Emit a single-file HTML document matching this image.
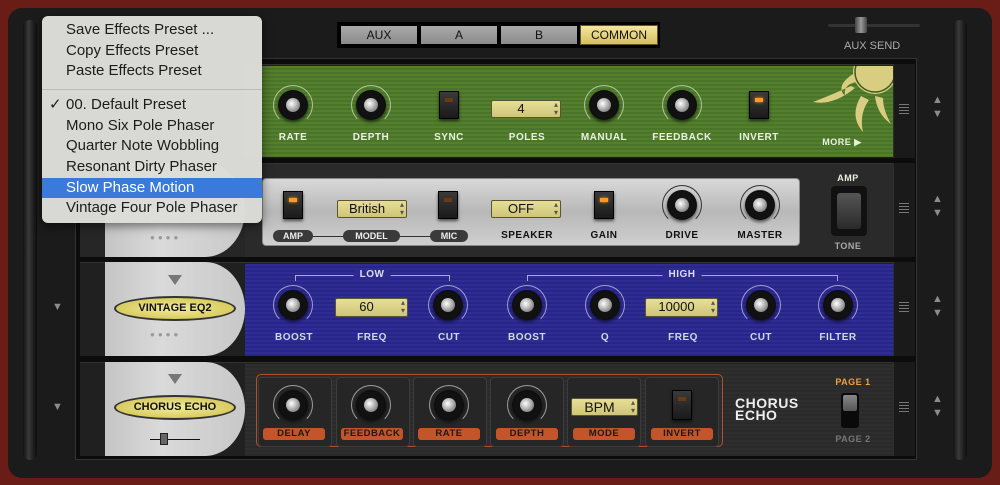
<!DOCTYPE html>
<html><head><meta charset="utf-8"><style>
*{margin:0;padding:0;box-sizing:border-box}
body{width:1000px;height:485px;background:#6a1c16;position:relative;overflow:hidden;font-family:"Liberation Sans",sans-serif}
.a{position:absolute}
.frame{left:8px;top:8px;width:984px;height:470px;background:#1b1b1b;border-radius:14px}
.rail{width:14px;background:linear-gradient(90deg,#111,#3a3a3a 40%,#222 70%,#0d0d0d);border-radius:7px}
.rack{left:75px;top:58px;width:842px;height:402px;background:#0c0c0c;border:1px solid #333}
.row{left:80px;width:833px;height:94px;background:#202020;border-top:1px solid #333}
.plate{width:140px;height:94px;background:linear-gradient(90deg,#c4c4c4,#dadada 40%,#c8c8c8);border-radius:0 40px 40px 0/0 50% 50% 0}
.handle{width:22px;height:94px;background:#1a1a1a;border-left:1px solid #2e2e2e}
.handle:after{content:"";position:absolute;left:5px;top:40px;width:10px;height:11px;background:repeating-linear-gradient(#777 0 1px,transparent 1px 3px)}
.knob{width:40px;height:40px;margin:-20px 0 0 -20px;border-radius:50%;border:1px solid rgba(255,255,255,.55);border-bottom-color:transparent}
.knob:before{content:"";position:absolute;left:4px;top:4px;width:30px;height:30px;border-radius:50%;background:radial-gradient(circle at 50% 50%,#111 60%,#000);box-shadow:0 2px 3px rgba(0,0,0,.6)}
.knob:after{content:"";position:absolute;left:12px;top:12px;width:14px;height:14px;border-radius:50%;background:radial-gradient(circle at 40% 40%,#fff,#999 60%,#555)}
.sw{width:20px;height:28px;margin:-14px 0 0 -10px;background:linear-gradient(#3a3a3a,#1a1a1a);border:1px solid #000;box-shadow:0 2px 3px rgba(0,0,0,.6)}
.sw:after{content:"";position:absolute;left:5px;top:6px;width:8px;height:4px;background:#6b3a10}
.sw.on:after{background:#ff9a20;box-shadow:0 0 3px #ff9a20}
.disp{height:18px;background:linear-gradient(#e6df95,#cfc57a);border:1px solid #5a5430;border-radius:2px;font-size:13px;color:#111;text-align:center;line-height:16px;padding-right:10px}
.disp:after{content:"▴\A▾";white-space:pre;position:absolute;right:2px;top:0;font-size:8px;line-height:8px;color:#555}
.lbl{font-size:10px;font-weight:bold;color:#e8f0e0;transform:translateX(-50%);white-space:nowrap;letter-spacing:.5px}
.pill{font-size:9.5px;font-weight:bold;color:#1a1a1a;background:#c4552b;border-radius:3px;height:12px;line-height:12px;text-align:center;letter-spacing:.5px}
.amppill{font-size:9px;font-weight:bold;color:#eee;background:#3a3a3a;border-radius:6px;height:12px;line-height:12px;text-align:center}
.tab{top:25px;width:78px;height:20px;background:linear-gradient(#aaa,#8a8a8a);border:1px solid #000;font-size:12px;color:#111;text-align:center;line-height:18px}
.oval{width:122px;height:25px;border-radius:50%;background:radial-gradient(ellipse,#f4ec9c,#d8cc60 70%,#8a8030);border:2px solid #333;font-size:11px;font-weight:bold;text-align:center;line-height:21px;color:#111}
.tri{width:0;height:0;border-left:7px solid transparent;border-right:7px solid transparent;border-top:10px solid #777}
.arr{color:#8c8c8c;font-size:11px;line-height:14px}
.menu{left:42px;top:16px;width:220px;height:207px;background:rgba(220,220,216,.98);border-radius:6px;box-shadow:0 3px 10px rgba(0,0,0,.5);font-size:15px;color:#1c1c1c}
.mi{position:absolute;left:24px;height:20px;line-height:20px;white-space:nowrap}
.grp{width:74px;height:70px;border:1px solid #3c3c3c;border-radius:4px;top:377px;background:#262626}
</style></head><body>
<div class="a frame"></div>
<div class="a rail" style="left:23px;top:20px;height:440px"></div>
<div class="a rail" style="left:953px;top:20px;height:440px"></div>
<div class="a" style="left:337px;top:22px;width:323px;height:26px;background:#000"></div>
<div class="a tab" style="left:340px">AUX</div>
<div class="a tab" style="left:420px">A</div>
<div class="a tab" style="left:500px">B</div>
<div class="a tab" style="left:580px;background:linear-gradient(#f4e6a0,#d6bf60);border-color:#6a5520">COMMON</div>
<div class="a" style="left:828px;top:24px;width:92px;height:3px;background:#333;border-radius:2px"></div>
<div class="a" style="left:855px;top:17px;width:12px;height:16px;background:linear-gradient(90deg,#444,#999,#444);border-radius:2px"></div>
<div class="a" style="left:844px;top:40px;font-size:11px;color:#aaa">AUX SEND</div>
<div class="a rack"></div>
<div class="a row" style="top:64px"></div>
<div class="a row" style="top:163px;background:#262626"></div>
<div class="a row" style="top:262px"></div>
<div class="a row" style="top:362px"></div>
<!-- row1 -->
<div class="a" style="left:243px;top:66px;width:650px;height:91px;background:repeating-linear-gradient(#547f2d 0 2px,#4a7427 2px 4px)"></div>
<svg class="a" style="left:805px;top:66px" width="88" height="70" viewBox="0 0 88 70"><g fill="#d9cd82"><circle cx="70" cy="6" r="22"/><path d="M48 8 Q30 20 40 30 Q38 18 52 16Z M50 22 Q28 40 8 36 Q24 30 46 20Z M56 30 Q44 50 58 66 Q54 48 64 34Z M70 30 Q72 48 86 58 Q78 44 78 32Z"/></g><circle cx="70" cy="6" r="20" fill="none" stroke="#3d5a20" stroke-width="1.5"/></svg>
<div class="a knob" style="left:293px;top:105px"></div>
<div class="a knob" style="left:371px;top:105px"></div>
<div class="a sw" style="left:449px;top:105px"></div>
<div class="a disp" style="left:491px;top:100px;width:70px">4</div>
<div class="a knob" style="left:604px;top:105px"></div>
<div class="a knob" style="left:682px;top:105px"></div>
<div class="a sw on" style="left:759px;top:105px"></div>
<div class="a lbl" style="left:293px;top:132px">RATE</div>
<div class="a lbl" style="left:371px;top:132px">DEPTH</div>
<div class="a lbl" style="left:449px;top:132px">SYNC</div>
<div class="a lbl" style="left:527px;top:132px">POLES</div>
<div class="a lbl" style="left:604px;top:132px">MANUAL</div>
<div class="a lbl" style="left:682px;top:132px">FEEDBACK</div>
<div class="a lbl" style="left:759px;top:132px">INVERT</div>
<div class="a lbl" style="left:842px;top:137px;font-size:9px">MORE ▶</div>
<!-- row2 -->
<div class="a" style="left:245px;top:164px;width:648px;height:93px;background:#2a2a2a"></div>
<div class="a plate" style="left:105px;top:163px"></div>
<div class="a" style="left:150px;top:233px;font-size:8px;color:#999;letter-spacing:3px">●●●●</div>
<div class="a" style="left:262px;top:178px;width:538px;height:68px;background:linear-gradient(#d8d8d8,#b8b8b8 50%,#cfcfcf);border-radius:4px;border:1px solid #888"></div>
<div class="a sw on" style="left:293px;top:205px"></div>
<div class="a disp" style="left:337px;top:200px;width:70px">British</div>
<div class="a sw" style="left:448px;top:205px"></div>
<div class="a disp" style="left:491px;top:200px;width:70px">OFF</div>
<div class="a sw on" style="left:604px;top:205px"></div>
<div class="a knob" style="left:682px;top:205px;border-color:#333;border-bottom-color:transparent"></div>
<div class="a knob" style="left:760px;top:205px;border-color:#333;border-bottom-color:transparent"></div>
<div class="a" style="left:293px;top:236px;width:170px;height:1px;background:#333"></div>
<div class="a amppill" style="left:273px;top:230px;width:40px">AMP</div>
<div class="a amppill" style="left:343px;top:230px;width:57px">MODEL</div>
<div class="a amppill" style="left:430px;top:230px;width:38px">MIC</div>
<div class="a lbl" style="left:527px;top:230px;color:#111">SPEAKER</div>
<div class="a lbl" style="left:604px;top:230px;color:#111">GAIN</div>
<div class="a lbl" style="left:682px;top:230px;color:#111">DRIVE</div>
<div class="a lbl" style="left:760px;top:230px;color:#111">MASTER</div>
<div class="a lbl" style="left:848px;top:173px;font-size:9px">AMP</div>
<div class="a" style="left:831px;top:186px;width:36px;height:50px;background:#111;border-radius:4px"></div>
<div class="a" style="left:837px;top:193px;width:24px;height:36px;background:linear-gradient(#555,#2a2a2a);border-radius:3px"></div>
<div class="a lbl" style="left:848px;top:241px;font-size:9px;color:#aaa">TONE</div>
<!-- row3 -->
<div class="a" style="left:245px;top:264px;width:648px;height:92px;background:repeating-linear-gradient(#2f2c92 0 2px,#27248a 2px 4px)"></div>
<div class="a plate" style="left:105px;top:262px"></div>
<div class="a tri" style="left:168px;top:275px"></div>
<div class="a oval" style="left:114px;top:296px">VINTAGE EQ2</div>
<div class="a" style="left:150px;top:330px;font-size:8px;color:#999;letter-spacing:3px">●●●●</div>
<div class="a" style="left:295px;top:275px;width:155px;height:6px;border:1px solid #aab;border-bottom:none"></div>
<div class="a lbl" style="left:372px;top:269px;background:#2c2a8e;padding:0 6px;color:#dde">LOW</div>
<div class="a" style="left:527px;top:275px;width:311px;height:6px;border:1px solid #aab;border-bottom:none"></div>
<div class="a lbl" style="left:682px;top:269px;background:#2c2a8e;padding:0 6px;color:#dde">HIGH</div>
<div class="a knob" style="left:293px;top:305px"></div>
<div class="a disp" style="left:335px;top:298px;width:73px;height:19px">60</div>
<div class="a knob" style="left:448px;top:305px"></div>
<div class="a knob" style="left:527px;top:305px"></div>
<div class="a knob" style="left:605px;top:305px"></div>
<div class="a disp" style="left:645px;top:298px;width:73px;height:19px">10000</div>
<div class="a knob" style="left:761px;top:305px"></div>
<div class="a knob" style="left:838px;top:305px"></div>
<div class="a lbl" style="left:294px;top:332px;color:#cdd">BOOST</div>
<div class="a lbl" style="left:372px;top:332px;color:#cdd">FREQ</div>
<div class="a lbl" style="left:449px;top:332px;color:#cdd">CUT</div>
<div class="a lbl" style="left:527px;top:332px;color:#cdd">BOOST</div>
<div class="a lbl" style="left:605px;top:332px;color:#cdd">Q</div>
<div class="a lbl" style="left:683px;top:332px;color:#cdd">FREQ</div>
<div class="a lbl" style="left:761px;top:332px;color:#cdd">CUT</div>
<div class="a lbl" style="left:838px;top:332px;color:#cdd">FILTER</div>
<!-- row4 -->
<div class="a" style="left:245px;top:364px;width:648px;height:92px;background:repeating-linear-gradient(#2e2e2e 0 2px,#2a2a2a 2px 4px)"></div>
<div class="a plate" style="left:105px;top:362px"></div>
<div class="a tri" style="left:168px;top:374px"></div>
<div class="a oval" style="left:114px;top:395px">CHORUS ECHO</div>
<div class="a" style="left:150px;top:439px;width:50px;height:1px;background:#111"></div>
<div class="a" style="left:160px;top:433px;width:8px;height:12px;background:#666;border:1px solid #222"></div>
<div class="a" style="left:256px;top:374px;width:467px;height:73px;border:1px solid #b0502a;border-radius:5px"></div>
<div class="a grp" style="left:258px"></div><div class="a grp" style="left:336px"></div><div class="a grp" style="left:413px"></div><div class="a grp" style="left:490px"></div><div class="a grp" style="left:567px"></div><div class="a grp" style="left:645px"></div>
<div class="a knob" style="left:293px;top:405px"></div>
<div class="a knob" style="left:371px;top:405px"></div>
<div class="a knob" style="left:449px;top:405px"></div>
<div class="a knob" style="left:527px;top:405px"></div>
<div class="a disp" style="left:571px;top:398px;width:67px;font-size:14px">BPM</div>
<div class="a sw" style="left:682px;top:405px;height:30px;margin-top:-15px"></div>
<div class="a pill" style="left:263px;top:428px;width:62px">DELAY</div>
<div class="a pill" style="left:341px;top:428px;width:62px">FEEDBACK</div>
<div class="a pill" style="left:418px;top:428px;width:62px">RATE</div>
<div class="a pill" style="left:496px;top:428px;width:62px">DEPTH</div>
<div class="a pill" style="left:573px;top:428px;width:62px">MODE</div>
<div class="a pill" style="left:651px;top:428px;width:62px">INVERT</div>
<div class="a" style="left:735px;top:397px;font-size:14px;font-weight:bold;color:#eee;line-height:12px;letter-spacing:.5px">CHORUS<br>ECHO</div>
<div class="a lbl" style="left:853px;top:377px;color:#f0a040;font-size:9px">PAGE 1</div>
<div class="a" style="left:841px;top:393px;width:18px;height:35px;background:#0a0a0a;border-radius:3px"></div>
<div class="a" style="left:843px;top:395px;width:14px;height:16px;background:linear-gradient(#888,#555);border-radius:2px"></div>
<div class="a lbl" style="left:853px;top:434px;color:#777;font-size:9px">PAGE 2</div>
<div class="a handle" style="left:893px;top:64px"></div>
<div class="a handle" style="left:893px;top:163px"></div>
<div class="a handle" style="left:893px;top:262px"></div>
<div class="a handle" style="left:893px;top:362px"></div>
<div class="a arr" style="left:932px;top:93px">▲<br>▼</div>
<div class="a arr" style="left:932px;top:192px">▲<br>▼</div>
<div class="a arr" style="left:932px;top:292px">▲<br>▼</div>
<div class="a arr" style="left:932px;top:392px">▲<br>▼</div>
<div class="a arr" style="left:52px;top:300px">▼</div>
<div class="a arr" style="left:52px;top:400px">▼</div>
<!-- menu -->
<div class="a menu">
<div class="mi" style="top:4px">Save Effects Preset ...</div>
<div class="mi" style="top:25px">Copy Effects Preset</div>
<div class="mi" style="top:45px">Paste Effects Preset</div>
<div style="position:absolute;left:0;right:0;top:73px;height:1px;background:#bcbcb8"></div>
<div class="mi" style="top:79px;left:7px">✓</div>
<div class="mi" style="top:79px">00. Default Preset</div>
<div class="mi" style="top:100px">Mono Six Pole Phaser</div>
<div class="mi" style="top:120px">Quarter Note Wobbling</div>
<div class="mi" style="top:141px">Resonant Dirty Phaser</div>
<div style="position:absolute;left:0;right:0;top:162px;height:20px;background:#3a7ada"></div>
<div class="mi" style="top:162px;color:#fff">Slow Phase Motion</div>
<div class="mi" style="top:182px">Vintage Four Pole Phaser</div>
</div>
</body></html>
